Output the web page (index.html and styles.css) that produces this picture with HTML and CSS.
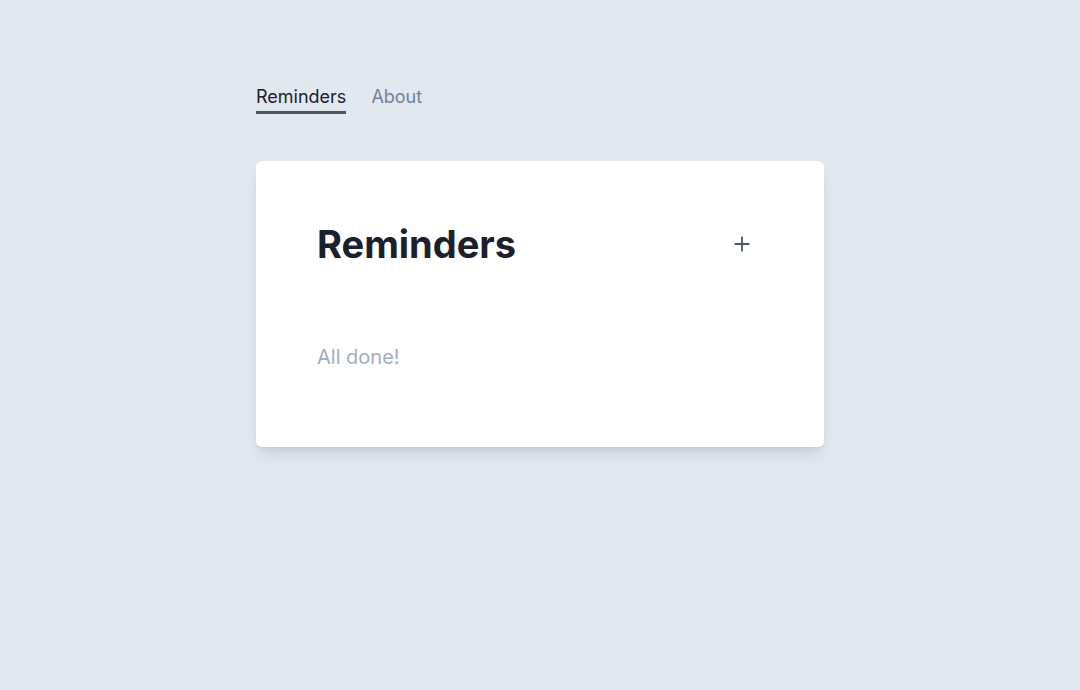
FILE: index.html
```html
<!DOCTYPE html>
<html lang="en">
<head>
<meta charset="utf-8">
<title>Reminders</title>
<link rel="stylesheet" href="styles.css">
</head>
<body>
<div class="page">
  <nav class="tabs">
    <a class="tab active" href="#">Reminders</a>
    <a class="tab" href="#">About</a>
  </nav>
  <section class="card">
    <header class="card-head">
      <h1 class="title">Reminders</h1>
      <button class="add" type="button" aria-label="Add reminder">
        <svg viewBox="0 0 24 24" width="20" height="20" fill="none" stroke="currentColor" stroke-width="2.2" stroke-linecap="round" stroke-linejoin="round"><path d="M12 4v16m8-8H4"/></svg>
      </button>
    </header>
    <p class="empty">All done!</p>
  </section>
</div>
</body>
</html>
```

FILE: styles.css
```css
* { box-sizing: border-box; }
html, body { margin: 0; padding: 0; }
body {
  background: #e2e8f0;
  font-family: Inter, "Noto Sans", "Liberation Sans", sans-serif;
  color: #1a202c;
  min-height: 690px;
}
.page {
  width: 568px;
  margin: 0 auto;
  padding-top: 83px;
}
.tabs {
  display: flex;
  gap: 25px;
}
.tab {
  font-size: 18px;
  line-height: 28px;
  text-decoration: none;
  color: #718096;
  border-bottom: 3px solid transparent;
}
.tab.active {
  color: #1a202c;
  border-bottom-color: #4a5568;
}
.card {
  margin-top: 47px;
  background: #fff;
  border-radius: 6px;
  box-shadow: 0 10px 15px -3px rgba(0,0,0,0.1), 0 4px 6px -2px rgba(0,0,0,0.05);
  padding: 61px 60px 76px 61px;
}
.card-head {
  display: flex;
  align-items: center;
  justify-content: space-between;
}
.title {
  margin: 0;
  font-size: 38px;
  line-height: 40px;
  font-weight: 700;
  color: #1a202c;
}
.add {
  border: 0;
  background: transparent;
  padding: 12px;
  color: #4a5568;
  display: flex;
  cursor: pointer;
}
.empty {
  margin: 77px 0 0;
  font-size: 20px;
  line-height: 28px;
  color: #a0aec0;
}
```
